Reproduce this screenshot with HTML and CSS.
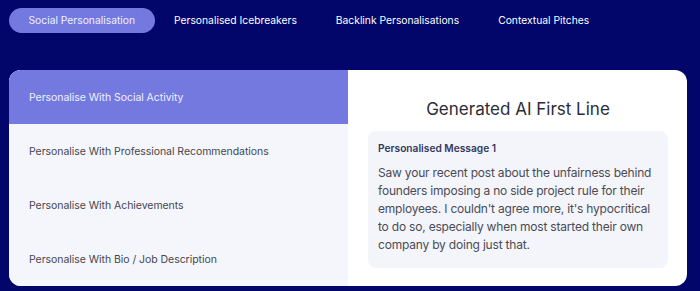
FILE: index.html
```html
<!DOCTYPE html>
<html lang="en">
<head>
<meta charset="utf-8">
<title>Social Personalisation</title>
<link rel="stylesheet" href="styles.css">
</head>
<body>
<nav class="tabs">
  <span class="tab active">Social Personalisation</span>
  <span class="tab">Personalised Icebreakers</span>
  <span class="tab">Backlink Personalisations</span>
  <span class="tab">Contextual Pitches</span>
</nav>
<section class="card">
  <ul class="options">
    <li class="option active">Personalise With Social Activity</li>
    <li class="option">Personalise With Professional Recommendations</li>
    <li class="option">Personalise With Achievements</li>
    <li class="option">Personalise With Bio / Job Description</li>
  </ul>
  <div class="result">
    <h2 class="result-title">Generated AI First Line</h2>
    <div class="message">
      <h3 class="message-label">Personalised Message 1</h3>
      <p class="message-text">Saw your recent post about the unfairness behind founders imposing a no side project rule for their employees. I couldn't agree more, it's hypocritical to do so, especially when most started their own company by doing just that.</p>
    </div>
  </div>
</section>
</body>
</html>
```
FILE: styles.css
```css
html, body {
  margin: 0;
  padding: 0;
}
body {
  background: #02066b;
  font-family: Inter, "Noto Sans", sans-serif;
  width: 700px;
  height: 291px;
  overflow: hidden;
}
.tabs {
  display: flex;
  padding: 8px 9px 0;
}
.tab {
  height: 25px;
  line-height: 25px;
  padding: 0 19.5px;
  font-size: 10.3px;
  color: #ffffff;
  border-radius: 13px;
  white-space: nowrap;
}
.tab.active {
  background: #7479e0;
  color: #eef0ff;
}
.card {
  display: flex;
  margin: 37px 0 0 9px;
  width: 678px;
  height: 216px;
  border-radius: 12px;
  overflow: hidden;
  background: #ffffff;
}
.options {
  list-style: none;
  margin: 0;
  padding: 0;
  width: 339px;
  flex: none;
  display: flex;
  flex-direction: column;
  background: #f5f6fb;
}
.option {
  flex: 1;
  display: flex;
  align-items: center;
  padding-left: 20px;
  font-size: 10.5px;
  letter-spacing: -0.05px;
  color: #45464f;
}
.option.active {
  background: #7479e0;
  color: #eef0ff;
}
.result {
  flex: 1;
  min-width: 0;
  padding: 28px 19px 0 20px;
}
.result-title {
  margin: 0 0 11px;
  text-align: center;
  font-size: 17px;
  line-height: 22px;
  font-weight: 400;
  color: #2a2c38;
}
.message {
  background: #f3f5fb;
  border-radius: 8px;
  padding: 10px 10px 14px;
}
.message-label {
  margin: 0 0 9px;
  font-size: 10.2px;
  line-height: 14px;
  font-weight: 600;
  color: #343a5e;
}
.message-text {
  margin: 0;
  font-size: 12px;
  line-height: 18px;
  letter-spacing: -0.2px;
  color: #4a4b55;
}
```
